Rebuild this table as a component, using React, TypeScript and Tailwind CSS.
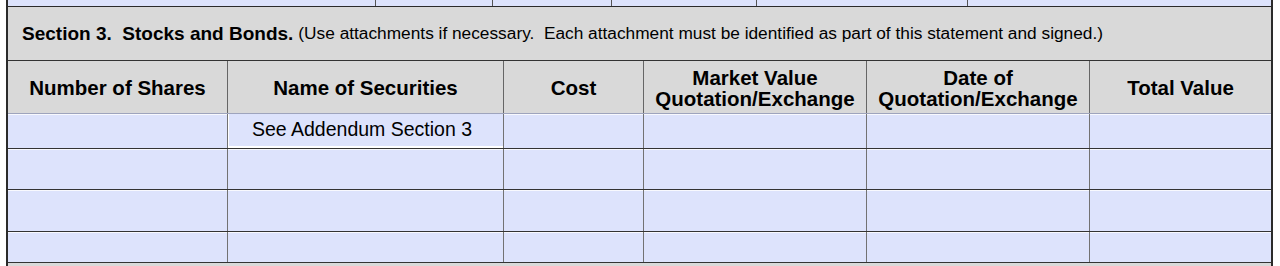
import React from "react";

const lav = "bg-[#dde3fc]";
const rowCols = "grid grid-cols-[219px_275px_139px_222px_222px_181px] gap-x-px";

const headers: string[][] = [
  ["Number of Shares"],
  ["Name of Securities"],
  ["Cost"],
  ["Market Value", "Quotation/Exchange"],
  ["Date of", "Quotation/Exchange"],
  ["Total Value"],
];

// one blank-ish row of form fields
const FieldRow = ({ height, first }: { height: string; first?: boolean }) => (
  <div className={`${rowCols} ${height} bg-[#727272]`}>
    {[0, 1, 2, 3, 4, 5].map((i) => (
      <div
        key={i}
        className={`${lav} flex items-center justify-center text-[19.5px] text-black ${
          first && i === 1 ? "border-l border-b-2 border-white pr-[8px]" : "border-t border-white/80"
        }`}
      >
        {first && i === 1 ? "See Addendum Section 3" : null}
      </div>
    ))}
  </div>
);

const App = () => {
  return (
    <div className="h-[266px] w-[1280px] overflow-hidden bg-white font-['Liberation_Sans',Arial,sans-serif]">
      <div className="ml-[6px] w-[1267px] border-x-2 border-[#2b2b2b]">
        {/* tail of the previous section */}
        <div className="grid h-[6px] grid-cols-[367px_116px_118px_144px_210px_303px] gap-x-px bg-[#555]">
          {[0, 1, 2, 3, 4, 5].map((i) => (
            <div key={i} className={lav} />
          ))}
        </div>
        <div className="h-px bg-[#2b2b2b]" />

        {/* Section title */}
        <div className="flex h-[53px] items-center bg-[#d9d9d9] pl-[14px] pt-[1px] text-black">
          <span className="text-[19px] font-bold">Section 3.&nbsp; Stocks and Bonds.</span>
          <span className="ml-[5px] text-[17.3px]">
            (Use attachments if necessary.&nbsp; Each attachment must be identified as part of this statement and
            signed.)
          </span>
        </div>
        <div className="h-px bg-[#333]" />

        {/* Column headers */}
        <div className={`${rowCols} h-[52px] bg-[#666]`}>
          {headers.map((lines, i) => (
            <div
              key={i}
              className="flex flex-col items-center justify-center bg-[#d9d9d9] pt-[1px] text-[20.5px] font-bold leading-[21px] text-black"
            >
              {lines.map((l) => (
                <span key={l}>{l}</span>
              ))}
            </div>
          ))}
        </div>
        <div className="h-px bg-[#9ea4bd]" />

        <FieldRow height="h-[34px]" first />
        <div className="h-px bg-[#333]" />
        <FieldRow height="h-[40px]" />
        <div className="h-px bg-[#333]" />
        <FieldRow height="h-[41px]" />
        <div className="h-px bg-[#333]" />
        <FieldRow height="h-[30px]" />
        <div className="h-px bg-[#333]" />

        {/* start of the next section */}
        <div className="h-[3px] bg-[#d9d9d9]" />
      </div>
    </div>
  );
};

export default App;
